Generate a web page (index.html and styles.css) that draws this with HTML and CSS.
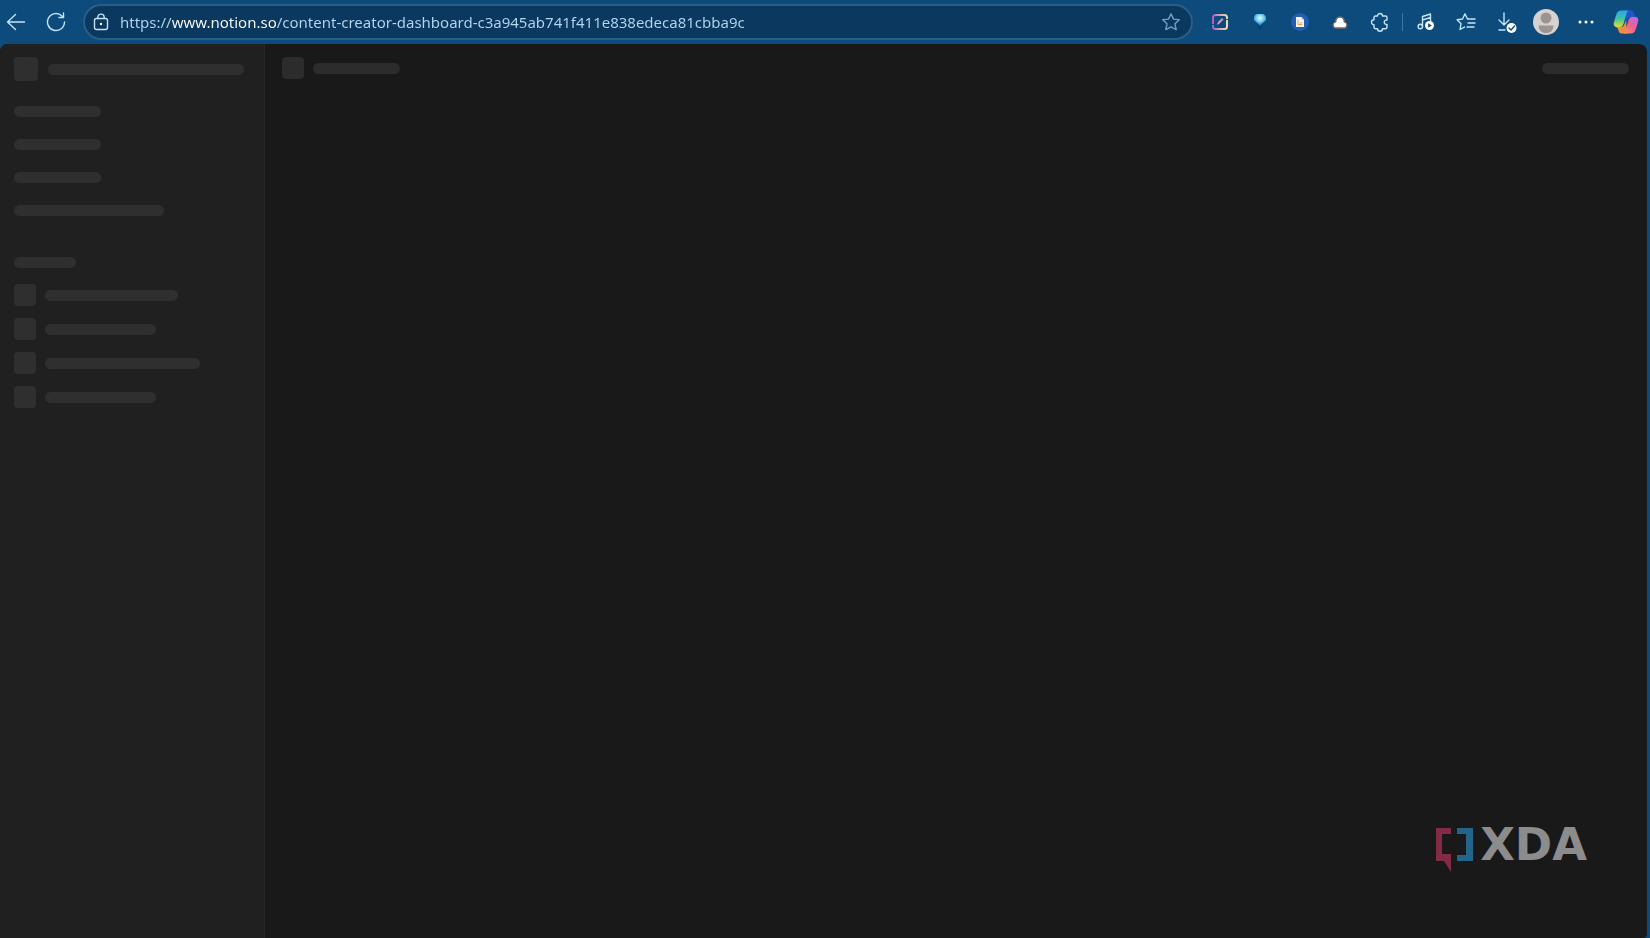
FILE: index.html
```
<!DOCTYPE html>
<html lang="en">
<head>
    <meta charset="UTF-8">
    <meta name="viewport" content="width=device-width, initial-scale=1.0">
    <title>Content Creator Dashboard</title>
    <link rel="stylesheet" href="styles.css">
</head>
<body>
    <header class="toolbar">
        <nav class="nav-buttons">
            <button class="nav-btn" aria-label="Back">
                <svg width="20" height="20" viewBox="0 0 20 20"><path d="M18.500 10H1.500M9.500 2.500L1.500 10l8 7.500"/></svg>
            </button>
            <button class="nav-btn" aria-label="Refresh">
                <svg width="20" height="20" viewBox="0 0 20 20"><path d="M18.500 10a8.500 8.500 0 1 1-2.600-6.100L17.500 5.500M17.500 1v4.500H13"/></svg>
            </button>
        </nav>

        <form class="address-bar">
            <button type="button" class="lock-btn" aria-label="Site information">
                <svg width="16" height="18" viewBox="0 0 16 18"><rect x="1.500" y="5.500" width="13" height="11" rx="2"/><path d="M4.800 5.500V4.300a3.200 3.200 0 0 1 6.400 0v1.200"/><circle class="solid" cx="8" cy="11" r="1.200"/></svg>
            </button>
            <input class="url" type="text" aria-label="Address" spellcheck="false" value="https://www.notion.so/content-creator-dashboard-c3a945ab741f411e838edeca81cbba9c">
            <button type="button" class="star-btn" aria-label="Add to favorites">
                <svg width="20" height="20" viewBox="0 0 20 20"><path d="M10 1.800l2.500 5.300 5.800.7-4.300 4 1.200 5.800L10 14.800l-5.200 2.800L6 11.800l-4.300-4 5.800-.7z"/></svg>
            </button>
        </form>

        <div class="extensions">
            <button class="tool-btn" aria-label="Screenshot">
                <svg width="18" height="18" viewBox="0 0 18 18">
                    <defs>
                        <linearGradient id="frame" x1="0" y1="0" x2="1" y2="0"><stop offset="0" stop-color="#b65ac8"/><stop offset=".5" stop-color="#d9a5a8"/><stop offset="1" stop-color="#e5ddb0"/></linearGradient>
                    </defs>
                    <rect x="2" y="2" width="14" height="14" rx="2.500" stroke="url(#frame)" stroke-width="2"/>
                    <path d="M6 12l1-3 4-4 1.500 1.500-4 4z" fill="#dd92ca" stroke="none"/>
                    <path d="M15.500 6.500h1.500M1 11.500h1.500" stroke="#0c4b7b" stroke-width="1"/>
                </svg>
            </button>
            <button class="tool-btn" aria-label="Gem">
                <svg width="18" height="20" viewBox="0 0 18 20">
                    <defs>
                        <radialGradient id="gem" cx=".5" cy=".35" r=".6"><stop offset="0" stop-color="#eafcff"/><stop offset=".4" stop-color="#8fdcf7"/><stop offset="1" stop-color="#178ad6"/></radialGradient>
                    </defs>
                    <path d="M5 2h7.500L15 4.500v3.500L9 13.500 3 8V4.500z" fill="url(#gem)" stroke="none"/>
                    <path d="M6.500 14h5L9 18z" fill="#093f68" stroke="none"/>
                </svg>
            </button>
            <button class="tool-btn" aria-label="Docs">
                <svg width="18" height="18" viewBox="0 0 18 18">
                    <circle cx="9" cy="9" r="9" fill="#255eb0" stroke="none"/>
                    <path d="M5 4h5.500L13 6.500V14H5z" fill="#f7f5f4" stroke="none"/>
                    <path d="M10.500 4v2.500H13z" fill="#9ec5f5" stroke="none"/>
                    <path d="M7 7v4.500h4M9 10h2" stroke="#d9ab55" stroke-width="1"/>
                </svg>
            </button>
            <button class="tool-btn" aria-label="Cloud">
                <svg width="18" height="18" viewBox="0 0 18 18">
                    <path d="M4 15a3.200 3.200 0 0 1 .9-6 4.200 4.200 0 1 1 8.200 0A3.200 3.200 0 0 1 14 15z" fill="#ffffff" stroke="#756c69" stroke-width="1.500"/>
                    <path d="M4.500 14h9a2.200 2.200 0 0 0 0-4.300h-1.300a3.300 3.300 0 1 0-6.400 0H4.500a2.200 2.200 0 0 0 0 4.300z" fill="#ffffff" stroke="none"/>
                </svg>
            </button>
            <button class="tool-btn" aria-label="Extensions">
                <svg width="20" height="20" viewBox="0 0 20 20"><path d="M5.500 4h2a2.500 2.500 0 0 1 5 0h3A1.500 1.500 0 0 1 17 5.500V8a2.300 2.300 0 1 0 0 4.500v2.800a1.500 1.500 0 0 1-1.500 1.500h-3a2.500 2.500 0 0 1-5 0h-2A1.500 1.500 0 0 1 4 15.300v-2.600a2.500 2.500 0 0 1 0-5V5.500A1.500 1.500 0 0 1 5.500 4z"/></svg>
            </button>
        </div>

        <div class="browser-tools">
            <button class="tool-btn" aria-label="Media">
                <svg width="20" height="20" viewBox="0 0 20 20">
                    <path d="M6.500 14.500V4.500L14.500 2v8M6.500 8l8-2.500"/>
                    <circle cx="4.300" cy="14.500" r="2.200"/>
                    <circle class="solid" cx="13.500" cy="13.500" r="4.500"/>
                    <path d="M12.200 11.200v4.600l3.700-2.300z" fill="#0c4b7b" stroke="none"/>
                </svg>
            </button>
            <button class="tool-btn" aria-label="Favorites">
                <svg width="20" height="20" viewBox="0 0 20 20"><path d="M11.500 7L9 1.800 6.500 7l-5.400.8L5 11.800l-1 5.700 4.500-2.400M11.500 7H19M12 11h7M11 15h7"/></svg>
            </button>
            <button class="tool-btn" aria-label="Downloads">
                <svg width="22" height="22" viewBox="0 0 22 22">
                    <path d="M9 2v12M4 9l5 5 5-5M4 19h6"/>
                    <circle class="solid" cx="16.500" cy="17" r="5"/>
                    <path d="M14 17l2 2 3.500-4" stroke="#0c4b7b"/>
                </svg>
            </button>
            <button class="tool-btn" aria-label="Profile">
                <svg width="26" height="26" viewBox="0 0 26 26">
                    <circle cx="13" cy="13" r="13" fill="#d6d2d0" stroke="none"/>
                    <circle cx="13" cy="9" r="5.500" fill="#9b9490" stroke="none"/>
                    <path d="M5 16h16c0 5.500-3.500 8.500-8 8.500S5 21.500 5 16z" fill="#9b9490" stroke="#d6d2d0" stroke-width="1"/>
                </svg>
            </button>
            <button class="tool-btn" aria-label="Settings and more">
                <svg width="18" height="18" viewBox="0 0 18 18"><circle class="solid" cx="3" cy="9" r="1.500"/><circle class="solid" cx="9" cy="9" r="1.500"/><circle class="solid" cx="15" cy="9" r="1.500"/></svg>
            </button>
            <button class="tool-btn" aria-label="Copilot">
                <svg width="26" height="26" viewBox="0 0 26 26">
                    <defs>
                        <linearGradient id="copilot-left" x1="0" y1="0" x2="0" y2="1"><stop offset="0" stop-color="#2aa5ee"/><stop offset=".5" stop-color="#3fc4a0"/><stop offset="1" stop-color="#e4dc2d"/></linearGradient>
                        <linearGradient id="copilot-right" x1="1" y1="0" x2="0" y2="1"><stop offset="0" stop-color="#b06cf0"/><stop offset=".5" stop-color="#f0608f"/><stop offset="1" stop-color="#ff9b54"/></linearGradient>
                    </defs>
                    <path d="M12 1.500h6c2 0 2.600 1.500 3.100 3.200C21.700 6.700 22 8 24 8h-6.500c-2 0-2.800 1.300-3.400 3.300L13 15z" fill="#2254cf" stroke="none"/>
                    <path d="M14 24.500H8.500c-2 0-2.600-1.500-3.100-3.200C4.800 19.300 4.300 18 2.500 18H8c2 0 3-1.300 3.600-3.300L13 11z" fill="#f58b3c" stroke="none"/>
                    <path d="M8 1.500h8.500c-1.800 0-2.600 1.600-3.200 3.700l-2.700 9.300c-.7 2.300-1.500 3.500-3.600 3.500H4C.8 18 .3 15.500 1 13l2.300-7.500C4.200 2.700 5.500 1.500 8 1.500z" fill="url(#copilot-left)" stroke="none"/>
                    <path d="M18 24.500H9.500c1.800 0 2.600-1.600 3.200-3.700l2.700-9.300C16.100 9.200 16.900 8 19 8h3c3.200 0 3.700 2.500 3 5l-2.300 7.500c-.9 2.800-2.200 4-4.700 4z" fill="url(#copilot-right)" stroke="none"/>
                </svg>
            </button>
        </div>
    </header>

    <div class="page">
        <aside class="sidebar">
            <div class="workspace">
                <span class="block large"></span>
                <span class="line"></span>
            </div>
            <div class="links">
                <span class="line short"></span>
                <span class="line short"></span>
                <span class="line short"></span>
                <span class="line long"></span>
            </div>
            <div class="section">
                <span class="line heading"></span>
                <div class="item"><span class="block"></span><span class="line medium"></span></div>
                <div class="item"><span class="block"></span><span class="line small"></span></div>
                <div class="item"><span class="block"></span><span class="line wide"></span></div>
                <div class="item"><span class="block"></span><span class="line small"></span></div>
            </div>
        </aside>
        <main class="content">
            <div class="topbar">
                <span class="block"></span>
                <span class="line short"></span>
                <span class="line short actions"></span>
            </div>
        </main>
    </div>

    <div class="watermark">
        <svg width="37" height="44" viewBox="0 0 37 44">
            <path d="M0 0h15v6H6v20h9v18L8 33H0z" fill="#832b45"/>
            <path d="M21 0h16v33H21v-6h9V6h-9z" fill="#23658a"/>
        </svg>
        <span>XDA</span>
    </div>
</body>
</html>
```
FILE: styles.css
```
* {
    box-sizing: border-box;
}

body {
    margin: 0;
    height: 100vh;
    display: flex;
    flex-direction: column;
    position: relative;
    overflow: hidden;
    background-color: #0c4b7b;
    font-family: "Noto Sans", "Open Sans", sans-serif;
}

button {
    display: flex;
    justify-content: center;
    align-items: center;
    padding: 0;
    border: none;
    background: none;
    color: #c4e4fa;
    cursor: pointer;
}

button svg {
    fill: none;
    stroke: currentColor;
    stroke-width: 1.4;
    stroke-linecap: round;
    stroke-linejoin: round;
}

button .solid {
    fill: #ffffff;
    stroke: none;
}

/* browser toolbar */
.toolbar {
    display: flex;
    align-items: center;
    height: 44px;
    padding: 0 4px 1px 0;
}

.nav-buttons {
    display: flex;
    gap: 8px;
}

.nav-btn {
    width: 32px;
    height: 36px;
}

.address-bar {
    flex: 1;
    display: flex;
    align-items: center;
    height: 36px;
    margin: 0 7px 0 11px;
    padding: 0 10px 0 8px;
    border: 2px solid #285f87;
    border-radius: 18px;
    background-color: #0a385f;
}

.lock-btn {
    width: 16px;
    height: 24px;
}

.star-btn {
    width: 20px;
    height: 24px;
    color: #6f9fc2;
}

.url {
    flex: 1;
    min-width: 0;
    height: 24px;
    margin: 0 11px;
    padding: 0;
    border: none;
    outline: none;
    font-family: inherit;
    font-size: 15px;
    /* host name is brighter than the rest of the address */
    background: linear-gradient(to right, #b5d7f0 52px, #ffffff 52px, #ffffff 156px, #b5d7f0 156px);
    -webkit-background-clip: text;
    background-clip: text;
    color: transparent;
    caret-color: #ffffff;
}

.extensions,
.browser-tools {
    display: flex;
    align-items: center;
}

.browser-tools {
    position: relative;
    padding-left: 6px;
}

.browser-tools::before {
    content: "";
    position: absolute;
    left: 2px;
    width: 1px;
    height: 18px;
    background-color: #3877a5;
}

.tool-btn {
    width: 40px;
    height: 36px;
}

/* page frame */
.page {
    flex: 1;
    display: flex;
    margin-right: 3px;
    border-radius: 8px 8px 4px 0;
    overflow: hidden;
    background-color: #191919;
}

.sidebar {
    width: 265px;
    padding: 13px 20px 0 14px;
    border-right: 1px solid #282828;
    background-color: #202020;
}

.line {
    display: block;
    height: 11px;
    border-radius: 6px;
    background-color: #2f2f2f;
}

.block {
    flex: none;
    width: 22px;
    height: 22px;
    border-radius: 4px;
    background-color: #2f2f2f;
}

.block.large {
    width: 24px;
    height: 24px;
}

.workspace {
    display: flex;
    align-items: center;
    gap: 10px;
    margin-bottom: 25px;
}

.workspace .line {
    flex: 1;
}

.links {
    display: flex;
    flex-direction: column;
    gap: 22px;
    margin-bottom: 41px;
}

.section {
    display: flex;
    flex-direction: column;
    gap: 12px;
}

.item {
    display: flex;
    align-items: center;
    gap: 9px;
}

.short {
    width: 87px;
}

.long {
    width: 150px;
}

.heading {
    width: 62px;
    margin-bottom: 4px;
}

.small {
    width: 111px;
}

.medium {
    width: 133px;
}

.wide {
    width: 155px;
}

.content {
    flex: 1;
}

.topbar {
    display: flex;
    align-items: center;
    gap: 9px;
    padding: 13px 18px 0 17px;
}

.topbar .line,
.topbar .block {
    background-color: #2c2c2c;
}

.topbar .actions {
    margin-left: auto;
}

.watermark {
    position: absolute;
    right: 63px;
    bottom: 66px;
    display: flex;
    gap: 7px;
    color: #8c8c8c;
    font-family: "DejaVu Sans", sans-serif;
    font-size: 45px;
    font-weight: bold;
    line-height: 34px;
}
```
